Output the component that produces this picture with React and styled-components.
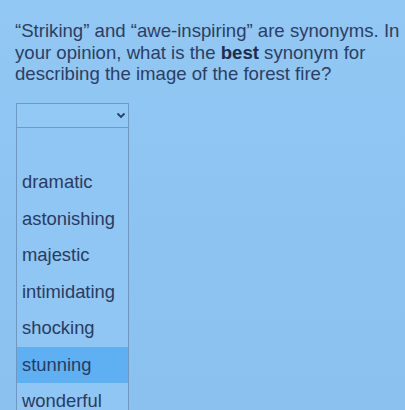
import styled, { createGlobalStyle } from "styled-components";

const Global = createGlobalStyle`
  html, body {
    margin: 0;
    padding: 0;
    background: #8cc4f2;
    overflow: hidden;
  }
  body {
    font-family: "Liberation Sans", Arial, sans-serif;
    color: #2b3c60;
  }
`;

const Page = styled.div`
  width: 405px;
  height: 410px;
  padding: 20px 4px 0 15px;
  box-sizing: border-box;
  display: flex;
  flex-direction: column;
  align-items: flex-start;
  overflow: hidden;
  background: linear-gradient(180deg, #92c8f3 0%, #8cc3f1 60%, #8ac1ef 100%);
`;

const Question = styled.p`
  margin: 0;
  font-size: 18.6px;
  line-height: 21.5px;
  color: #2d3e62;

  b {
    color: #1f2d4c;
  }
`;

const Select = styled.div`
  flex-shrink: 0;
  margin-top: 18px;
  margin-left: 1px;
  width: 113px;
  height: 25px;
  box-sizing: border-box;
  border: 1px solid #6e9ac4;
  background: #93caf5;
  display: flex;
  align-items: center;
  justify-content: flex-end;
  padding-right: 2px;
  color: #2a3f66;
`;

const List = styled.ul`
  flex-shrink: 0;
  list-style: none;
  margin: 0;
  margin-left: 1px;
  padding: 0;
  width: 113px;
  box-sizing: border-box;
  border: 1px solid #6f97c0;
  border-top: none;
  background: #90c6f3;
`;

const Option = styled.li`
  height: 36.5px;
  display: flex;
  align-items: center;
  padding-left: 5px;
  font-size: 18.4px;
  color: #2a3b60;
  background: ${(p) => (p.$active ? "#5eb0f3" : "transparent")};
`;

const options = [
  "",
  "dramatic",
  "astonishing",
  "majestic",
  "intimidating",
  "shocking",
  "stunning",
  "wonderful",
];

export default function App() {
  return (
    <Page>
      <Global />
      <Question>
        “Striking” and “awe-inspiring” are synonyms. In your opinion, what is
        the <b>best</b> synonym for describing the image of the forest fire?
      </Question>
      <Select>
        <svg width="10" height="7" viewBox="0 0 10 7">
          <path
            d="M1.5 1.5 L5 5 L8.5 1.5"
            fill="none"
            stroke="currentColor"
            strokeWidth="1.8"
          />
        </svg>
      </Select>
      <List>
        {options.map((o, i) => (
          <Option key={i} $active={o === "stunning"}>
            {o}
          </Option>
        ))}
      </List>
    </Page>
  );
}
